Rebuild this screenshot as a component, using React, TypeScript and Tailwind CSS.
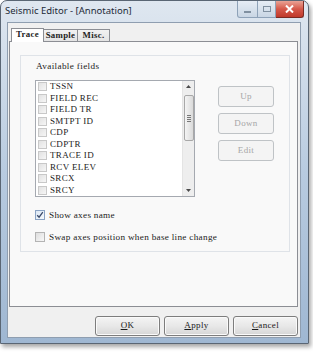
import React from "react";

const fields = ["TSSN", "FIELD REC", "FIELD TR", "SMTPT ID", "CDP", "CDPTR", "TRACE ID", "RCV ELEV", "SRCX", "SRCY"];

const dlg = { fontFamily: '"Liberation Serif", "Times New Roman", serif' };

function Box({ checked = false, hot = false }: { checked?: boolean; hot?: boolean }) {
  return (
    <div
      className={`w-[10px] h-[10px] border flex items-center justify-center shrink-0 ${
        hot ? "border-[#8aa3c4] bg-gradient-to-br from-[#dce8f5] to-[#f4f8fc]" : "border-[#b4b4b4] bg-gradient-to-br from-[#dedede] to-[#f8f8f8]"
      }`}
    >
      {checked && (
        <svg width="8" height="8" viewBox="0 0 8 8">
          <path d="M1.2 4.2 L3.1 6.2 L6.8 1.2" stroke="#3a4a6a" strokeWidth="1.3" fill="none" />
        </svg>
      )}
    </div>
  );
}

function ListBox() {
  return (
    <div className="w-[160px] h-[117px] border border-[#a5a9b0] bg-white flex">
      <div className="flex-1 flex flex-col">
        {fields.map((f) => (
          <div key={f} className="h-[11.6px] flex items-center pl-[2px] gap-[3px]">
            <div className="w-[9px] h-[9px] border border-[#c8c8c8] bg-gradient-to-br from-[#e2e2e2] to-[#f6f6f6]" />
            <span className="text-[9px] leading-none text-[#222] tracking-[0.35px]" style={dlg}>
              {f}
            </span>
          </div>
        ))}
      </div>
      <div className="w-[12px] bg-[#eeeeee] border-l border-[#e4e4e4] flex flex-col items-center">
        <div className="h-[11px] w-full flex items-center justify-center">
          <svg width="5" height="3" viewBox="0 0 5 3">
            <path d="M0 3 L2.5 0 L5 3 Z" fill="#4a4a4a" />
          </svg>
        </div>
        <div className="mt-[3px] w-[10px] h-[46px] rounded-[2px] border border-[#a8a8a8] bg-gradient-to-r from-[#f4f4f4] to-[#dadada] flex flex-col items-center justify-center gap-[1px]">
          <div className="w-[4px] h-[1px] bg-[#777]" />
          <div className="w-[4px] h-[1px] bg-[#777]" />
          <div className="w-[4px] h-[1px] bg-[#777]" />
          <div className="w-[4px] h-[1px] bg-[#777]" />
        </div>
        <div className="flex-1" />
        <div className="h-[11px] w-full flex items-center justify-center">
          <svg width="5" height="3" viewBox="0 0 5 3">
            <path d="M0 0 L2.5 3 L5 0 Z" fill="#4a4a4a" />
          </svg>
        </div>
      </div>
    </div>
  );
}

function DisBtn({ label }: { label: string }) {
  return (
    <div
      className="w-[56px] h-[21px] rounded-[3px] border border-[#bfc3c6] bg-[#f4f4f4] flex items-center justify-center text-[9px] tracking-[0.35px] text-[#a6a6a6]"
      style={dlg}
    >
      {label}
    </div>
  );
}

function Btn({ children }: { children: React.ReactNode }) {
  return (
    <div
      className="w-[65px] h-[20px] rounded-[3px] border border-[#7d7d7d] bg-gradient-to-b from-[#f4f4f4] via-[#e8e8e8] to-[#d6d6d6] flex items-center justify-center text-[9px] tracking-[0.35px] text-[#1a1a1a] shadow-[inset_0_0_0_1px_#fafafa]"
      style={dlg}
    >
      {children}
    </div>
  );
}

export default function App() {
  return (
    <div className="w-[313px] h-[352px] bg-white relative overflow-hidden">
      <div className="w-[309px] h-[344px] rounded-t-[7px] border border-[#5a6674] bg-gradient-to-b from-[#dfe7f0] via-[#b8cbe0] to-[#9fb7d2] shadow-[2px_3px_4px_rgba(0,0,0,0.35)] flex flex-col">
        {/* title bar */}
        <div className="h-[21px] flex items-start justify-between">
          <div
            className="pl-[4px] pt-[5px] text-[9.5px] leading-none text-[#1e2a38]"
            style={{ fontFamily: '"Noto Sans", "Liberation Sans", sans-serif' }}
          >
            Seismic Editor - [Annotation]
          </div>
          <div className="flex mr-[4px]">
            <div className="w-[21px] h-[17px] rounded-bl-[3px] border border-t-0 border-[#8ea2b8] bg-gradient-to-b from-[#e6edf5] to-[#c9d6e4] flex items-center justify-center">
              <div className="w-[7px] h-[2px] bg-white border border-[#8090a0] mt-[5px]" />
            </div>
            <div className="w-[18px] h-[17px] border border-t-0 border-l-0 border-[#8ea2b8] bg-gradient-to-b from-[#e6edf5] to-[#c9d6e4] flex items-center justify-center">
              <div className="w-[8px] h-[6px] border border-[#8090a0] bg-transparent" />
            </div>
            <div className="w-[28px] h-[17px] rounded-br-[3px] border border-t-0 border-l-0 border-[#7a2a22] bg-gradient-to-b from-[#e8a295] via-[#d5584a] to-[#c0392b] flex items-center justify-center">
              <svg width="9" height="8" viewBox="0 0 9 8">
                <path d="M1 0.5 L8 7.5 M8 0.5 L1 7.5" stroke="white" strokeWidth="2" />
              </svg>
            </div>
          </div>
        </div>
        {/* client */}
        <div className="ml-[6px] w-[294px] h-[316px] bg-[#f0f0f0] border border-[#8f9eb0] flex flex-col" style={dlg}>
          {/* tabs */}
          <div className="flex items-end pl-[3px] pt-[4px] h-[18px]">
            <div className="h-[14px] w-[33px] border border-b-0 border-[#8c8e94] bg-white flex items-center justify-center text-[8.8px] tracking-[0.3px] font-bold text-[#222] relative z-10 -mb-[1px] pb-[1px]">
              Trace
            </div>
            <div className="h-[12px] w-[34px] border border-b-0 border-l-0 border-[#8c8e94] bg-gradient-to-b from-[#f2f2f2] to-[#e4e4e4] flex items-center justify-center text-[8.8px] tracking-[0.3px] font-bold text-[#222]">
              Sample
            </div>
            <div className="h-[12px] w-[32px] border border-b-0 border-l-0 border-[#8c8e94] bg-gradient-to-b from-[#f2f2f2] to-[#e4e4e4] flex items-center justify-center text-[8.8px] tracking-[0.3px] font-bold text-[#222]">
              Misc.
            </div>
          </div>
          {/* panel */}
          <div className="ml-[1px] w-[289px] h-[266px] border border-[#8c8e94] bg-[#f9f9f9] pt-[13px] pl-[10px]">
            <div className="w-[270px] h-[197px] border border-[#dfe3e8] pt-[6px] pl-[14px]">
              <div className="text-[9.2px] tracking-[0.35px] leading-none text-[#222] pl-[1px]">Available fields</div>
              <div className="flex mt-[9px]">
                <ListBox />
                <div className="ml-[23px] mt-[6px] flex flex-col gap-[6px]">
                  <DisBtn label="Up" />
                  <DisBtn label="Down" />
                  <DisBtn label="Edit" />
                </div>
              </div>
              <div className="mt-[13px] flex items-center gap-[4px]">
                <Box checked hot />
                <span className="text-[9.2px] tracking-[0.3px] leading-none text-[#222]">Show axes name</span>
              </div>
              <div className="mt-[12px] flex items-center gap-[4px]">
                <Box />
                <span className="text-[9.2px] tracking-[0.3px] leading-none text-[#222]">Swap axes position when base line change</span>
              </div>
            </div>
          </div>
          {/* bottom buttons */}
          <div className="flex justify-end gap-[4px] pr-[2px] mt-[9px]">
            <Btn>
              <span className="underline">O</span>K
            </Btn>
            <Btn>
              <span className="underline">A</span>pply
            </Btn>
            <Btn>
              <span className="underline">C</span>ancel
            </Btn>
          </div>
        </div>
      </div>
    </div>
  );
}
